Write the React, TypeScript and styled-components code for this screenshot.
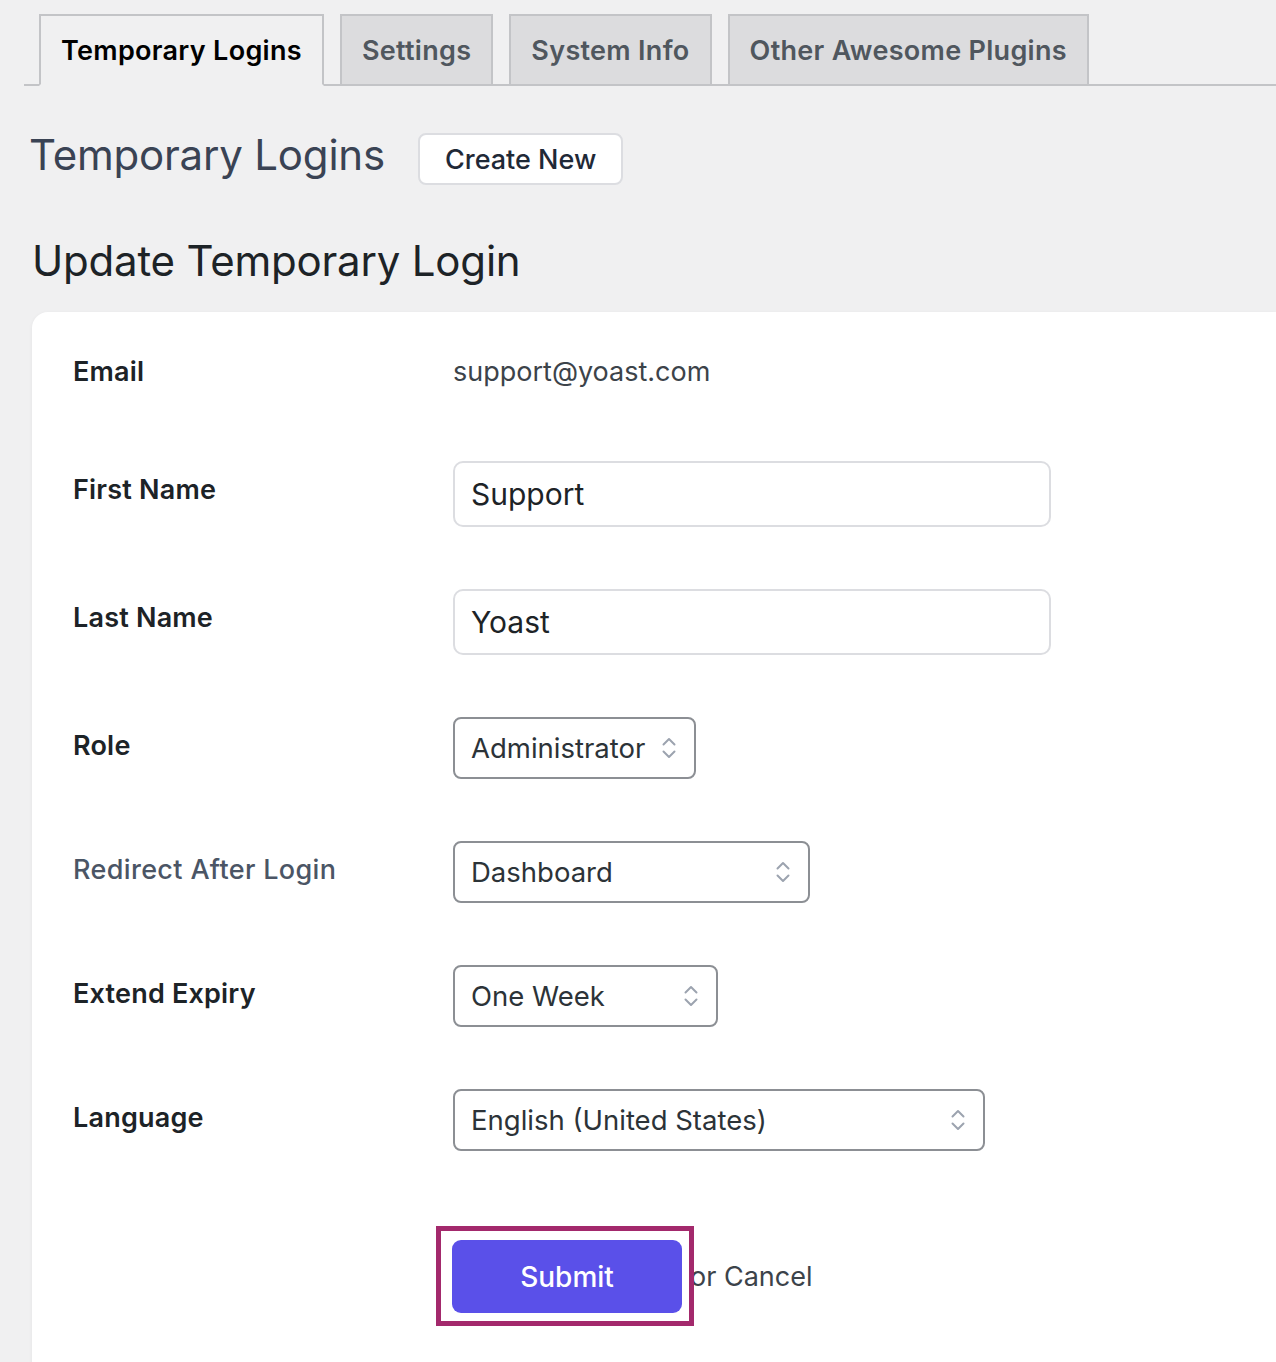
import styled, { createGlobalStyle } from "styled-components";

const GlobalStyle = createGlobalStyle`
  body {
    margin: 0;
    background: #f0f0f1;
    font-family: Inter, "Noto Sans", sans-serif;
    color: #3c434a;
  }
  * { box-sizing: border-box; }
`;

const tabs = ["Temporary Logins", "Settings", "System Info", "Other Awesome Plugins"];

const selects = [
  { label: "Role", value: "Administrator", width: 243 },
  { label: "Redirect After Login", value: "Dashboard", width: 357, muted: true },
  { label: "Extend Expiry", value: "One Week", width: 265 },
  { label: "Language", value: "English (United States)", width: 532 },
];

const Chevrons = () => (
  <ChevronIcon viewBox="0 0 14 24" aria-hidden="true">
    <path d="M1.5 8.5 L7 3 L12.5 8.5" />
    <path d="M1.5 15.5 L7 21 L12.5 15.5" />
  </ChevronIcon>
);

export default function App() {
  return (
    <Wrap>
      <GlobalStyle />
      <TabBar>
        {tabs.map((t, i) => (
          <Tab key={t} $active={i === 0}>
            {t}
          </Tab>
        ))}
      </TabBar>

      <Header>
        <PageTitle>Temporary Logins</PageTitle>
        <CreateButton type="button">Create New</CreateButton>
      </Header>

      <SectionTitle>Update Temporary Login</SectionTitle>

      <Card>
        <Row>
          <Label>Email</Label>
          <StaticValue>support@yoast.com</StaticValue>
        </Row>
        <Row>
          <Label>First Name</Label>
          <div>
            <TextInput defaultValue="Support" />
          </div>
        </Row>
        <Row>
          <Label>Last Name</Label>
          <div>
            <TextInput defaultValue="Yoast" />
          </div>
        </Row>
        {selects.map((s) => (
          <Row key={s.label}>
            <Label $muted={s.muted}>{s.label}</Label>
            <div>
              <SelectWrap $width={s.width}>
                <Select defaultValue={s.value}>
                  <option>{s.value}</option>
                </Select>
                <Chevrons />
              </SelectWrap>
            </div>
          </Row>
        ))}
        <SubmitRow>
          <span />
          <Actions>
            <SubmitWrap>
              <SubmitButton type="button">Submit</SubmitButton>
              <Highlight />
            </SubmitWrap>
            <CancelText>or Cancel</CancelText>
          </Actions>
        </SubmitRow>
      </Card>
    </Wrap>
  );
}

const Wrap = styled.div`
  padding-left: 24px;
  overflow: hidden;
`;

const TabBar = styled.nav`
  display: flex;
  gap: 16px;
  margin-top: 14px;
  padding-left: 15px;
  border-bottom: 2px solid #c3c4c7;
`;

const Tab = styled.a<{ $active?: boolean }>`
  display: flex;
  align-items: center;
  height: 72px;
  margin-bottom: -2px;
  padding: 0 20px;
  border: 2px solid #c3c4c7;
  border-bottom-color: ${(p) => (p.$active ? "#f0f0f1" : "#c3c4c7")};
  background: ${(p) => (p.$active ? "#f0f0f1" : "#dcdcde")};
  color: ${(p) => (p.$active ? "#000" : "#50575e")};
  font-size: 27px;
  font-weight: 600;
  letter-spacing: 0.3px;
  white-space: nowrap;
  cursor: pointer;
`;

const Header = styled.div`
  display: flex;
  align-items: center;
  gap: 33px;
  height: 52px;
  margin: 47px 0 0 5px;
`;

const PageTitle = styled.h1`
  margin: 0;
  padding-bottom: 9px;
  font-size: 42px;
  font-weight: 400;
  letter-spacing: -0.2px;
  line-height: 52px;
  color: #3a4354;
`;

const CreateButton = styled.button`
  height: 52px;
  padding: 0 25px;
  background: #fff;
  border: 2px solid #dcdde1;
  border-radius: 8px;
  font-family: inherit;
  font-size: 27px;
  font-weight: 500;
  color: #1f2937;
`;

const SectionTitle = styled.h2`
  margin: 48px 0 23px 8px;
  font-size: 42px;
  font-weight: 400;
  letter-spacing: -0.2px;
  line-height: 56px;
  color: #1d2327;
`;

const Card = styled.section`
  margin-left: 8px;
  padding: 0 0 80px 41px;
  background: #fff;
  border-top-left-radius: 16px;
  box-shadow: 0 1px 4px rgba(0, 0, 0, 0.05);
`;

const Row = styled.div`
  display: grid;
  grid-template-columns: 380px 1fr;
  align-items: start;
  padding: 31px 0;
`;

const SubmitRow = styled(Row)`
  padding-top: 58px;
`;

const Label = styled.div<{ $muted?: boolean }>`
  margin-top: 9px;
  line-height: 40px;
  font-size: 27px;
  letter-spacing: ${(p) => (p.$muted ? "0.35px" : "0.2px")};
  font-weight: ${(p) => (p.$muted ? 500 : 600)};
  color: ${(p) => (p.$muted ? "#4b5565" : "#1d2327")};
`;

const StaticValue = styled.div`
  padding: 9px 0 7px;
  line-height: 40px;
  font-size: 27px;
  color: #3c434a;
`;

const TextInput = styled.input`
  width: 598px;
  height: 66px;
  padding: 0 16px;
  border: 2px solid #dcdde1;
  border-radius: 10px;
  font-family: inherit;
  font-size: 30px;
  color: #1d2327;
  outline: none;
`;

const SelectWrap = styled.div<{ $width: number }>`
  position: relative;
  width: ${(p) => p.$width}px;
`;

const Select = styled.select`
  width: 100%;
  height: 62px;
  padding: 0 36px 0 16px;
  appearance: none;
  background: #fff;
  border: 2px solid #8c8f94;
  border-radius: 8px;
  font-family: inherit;
  font-size: 27.5px;
  color: #2c3338;
  outline: none;
`;

const ChevronIcon = styled.svg`
  position: absolute;
  right: 20px;
  top: 50%;
  width: 14px;
  height: 24px;
  transform: translateY(-50%);
  pointer-events: none;
  fill: none;
  stroke: #9ca3af;
  stroke-width: 2;
  stroke-linecap: round;
  stroke-linejoin: round;
`;

const Actions = styled.div`
  display: flex;
  align-items: center;
  margin-left: -1px;
`;

const SubmitWrap = styled.div`
  position: relative;
`;

const SubmitButton = styled.button`
  display: block;
  width: 230px;
  height: 73px;
  background: #5a50e9;
  border: none;
  border-radius: 9px;
  font-family: inherit;
  font-size: 28px;
  font-weight: 500;
  color: #fff;
`;

const Highlight = styled.div`
  position: absolute;
  top: -14px;
  left: -16px;
  right: -12px;
  bottom: -13px;
  border: 5px solid #a3296c;
  z-index: 1;
  pointer-events: none;
`;

const CancelText = styled.span`
  margin-left: 8px;
  font-size: 27px;
  color: #3c434a;
`;
